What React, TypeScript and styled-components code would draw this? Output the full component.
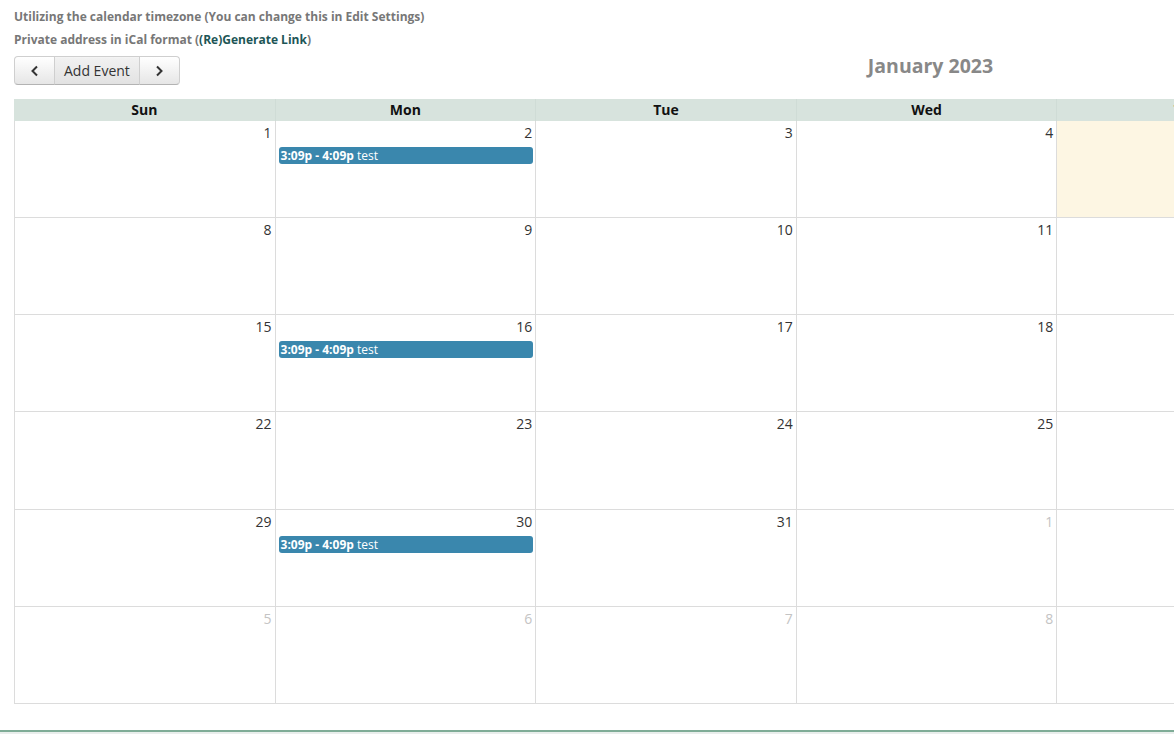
import React from "react";
import styled, { createGlobalStyle } from "styled-components";

const Global = createGlobalStyle`
  html, body { margin: 0; padding: 0; overflow: hidden; background: #fff; }
  body { font-family: "Open Sans", "Noto Sans", sans-serif; }
`;

const Page = styled.div`
  width: 1174px;
  height: 734px;
  display: flex;
  flex-direction: column;
  overflow: hidden;
`;

const Content = styled.div`
  padding: 5px 0 0 14px;
  flex: 1;
`;

const Info = styled.div`
  font-size: 12px;
  font-weight: 700;
  line-height: 23px;
  color: #777;
  white-space: nowrap;
`;

const Link = styled.a`
  color: #1d5656;
  text-decoration: none;
`;

const Toolbar = styled.div`
  width: 1824px;
  display: grid;
  grid-template-columns: 1fr auto 1fr;
  align-items: start;
  margin-top: 5px;
  height: 43px;
`;

const ButtonGroup = styled.div`
  display: flex;
`;

const Btn = styled.button<{ $pos: "first" | "mid" | "last" }>`
  height: 29px;
  padding: 0 ${(p) => (p.$pos === "mid" ? "9px" : "0")};
  width: ${(p) => (p.$pos === "mid" ? "auto" : "41px")};
  display: flex;
  align-items: center;
  justify-content: center;
  font-family: "Open Sans", sans-serif;
  font-size: 14px;
  color: #333;
  background: linear-gradient(#ffffff, #e6e6e6);
  border: 1px solid #cfcfcf;
  border-bottom-color: #b3b3b3;
  margin-left: ${(p) => (p.$pos === "first" ? "0" : "-1px")};
  border-radius: ${(p) =>
    p.$pos === "first" ? "4px 0 0 4px" : p.$pos === "last" ? "0 4px 4px 0" : "0"};
  box-shadow: inset 0 1px 0 rgba(255, 255, 255, 0.2);
  cursor: pointer;
`;

const MidBtn = styled(Btn)`
  background: linear-gradient(#f2f2f2, #e2e2e2);
`;

const Title = styled.h2`
  margin: 0;
  font-size: 19.5px;
  font-weight: 700;
  line-height: 22px;
  padding: 0 0 0 9px;
  margin-top: -1px;
  color: #888;
`;

const Grid = styled.div`
  width: 1824px;
  display: grid;
  grid-template-columns: repeat(7, 1fr);
`;

const HeadCell = styled.div`
  height: 22px;
  line-height: 22px;
  text-align: center;
  font-size: 14px;
  font-weight: 700;
  color: #111;
  background: #d7e3dd;
  border-left: 1px solid #cfdcd6;
  &:first-child { border-left: none; }
`;

const DayCell = styled.div<{ $today?: boolean }>`
  height: 96.17px;
  border-left: 1px solid #dcdcdc;
  border-bottom: 1px solid #dcdcdc;
  background: ${(p) => (p.$today ? "#fdf6e3" : "#fff")};
  display: flex;
  flex-direction: column;
`;

const DayNum = styled.div<{ $other?: boolean }>`
  font-size: 14px;
  line-height: 20px;
  padding: 2px 3px 0 0;
  text-align: right;
  color: ${(p) => (p.$other ? "#c4c4c4" : "#333")};
`;

const Event = styled.div`
  margin: 4px 2px 0 3px;
  height: 17px;
  line-height: 17px;
  border-radius: 3px;
  background: #3a87ad;
  color: #fff;
  font-size: 12px;
  padding-left: 2px;
  white-space: nowrap;
  overflow: hidden;
  b { font-weight: 700; }
`;

const Footer = styled.div`
  height: 2px;
  background: #e9eeec;
  border-top: 2px solid #7fac97;
`;

const Chevron = ({ dir }: { dir: "l" | "r" }) => (
  <svg width="10" height="12" viewBox="0 0 10 12">
    <path
      d={dir === "l" ? "M7 1.5 L2.5 6 L7 10.5" : "M3 1.5 L7.5 6 L3 10.5"}
      fill="none"
      stroke="#333"
      strokeWidth="2"
    />
  </svg>
);

const days = ["Sun", "Mon", "Tue", "Wed", "Thu", "Fri", "Sat"];

type Cell = { n: number; other?: boolean; today?: boolean; event?: boolean };

const weeks: Cell[][] = [];
{
  let d = 1;
  for (let w = 0; w < 6; w++) {
    const row: Cell[] = [];
    for (let i = 0; i < 7; i++) {
      if (d <= 31) {
        row.push({ n: d, today: d === 5, event: d === 2 || d === 16 || d === 30 });
      } else {
        row.push({ n: d - 31, other: true });
      }
      d++;
    }
    weeks.push(row);
  }
}

export default function App() {
  return (
    <Page>
      <Global />
      <Content>
        <Info>Utilizing the calendar timezone (You can change this in Edit Settings)</Info>
        <Info>
          Private address in iCal format (<Link href="#">(Re)Generate Link</Link>)
        </Info>
        <Toolbar>
          <ButtonGroup>
            <Btn $pos="first" aria-label="prev">
              <Chevron dir="l" />
            </Btn>
            <MidBtn $pos="mid">Add Event</MidBtn>
            <Btn $pos="last" aria-label="next">
              <Chevron dir="r" />
            </Btn>
          </ButtonGroup>
          <Title>January 2023</Title>
          <div />
        </Toolbar>
        <Grid>
          {days.map((d) => (
            <HeadCell key={d}>{d}</HeadCell>
          ))}
          {weeks.flat().map((c, i) => (
            <DayCell key={i} $today={c.today}>
              <DayNum $other={c.other}>{c.n}</DayNum>
              {c.event && (
                <Event>
                  <b>3:09p - 4:09p</b> test
                </Event>
              )}
            </DayCell>
          ))}
        </Grid>
      </Content>
      <Footer />
    </Page>
  );
}
